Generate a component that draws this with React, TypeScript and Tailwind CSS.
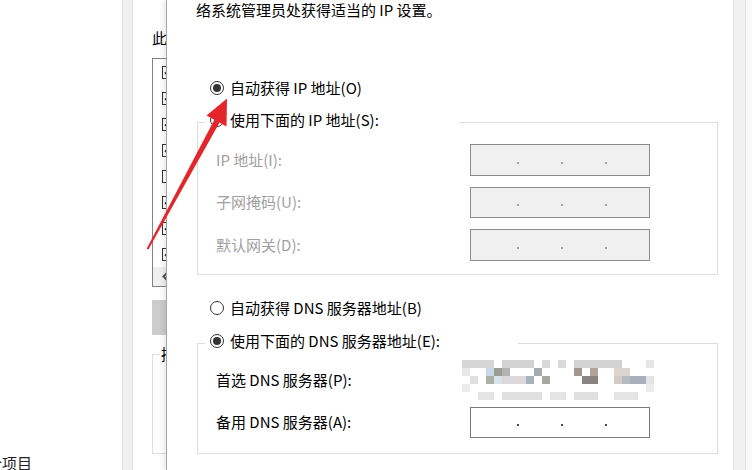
import React from 'react';

type Block = [number, number, number, string];

// blurred address: [col, row, span, colour], 8px blocks
const mosaic: Block[] = [
  [0, 0, 4, '#d6d6d6'], [5, 0, 4, '#d2d2d2'], [10, 0, 1, '#d8d8d8'], [12, 0, 1, '#dadada'], [14, 0, 6, '#d2d2d2'], [23, 0, 1, '#e6e6e6'],
  [0, 1, 1, '#e8e8e8'], [3, 1, 1, '#c8d8e4'], [4, 1, 1, '#9c9c98'], [5, 1, 1, '#b4b4b2'], [9, 1, 1, '#a8acb0'], [14, 1, 1, '#a0988c'], [16, 1, 1, '#b0a49c'], [19, 1, 2, '#ddd5cd'],
  [1, 2, 1, '#e0e0e0'], [3, 2, 1, '#acb0a8'], [4, 2, 1, '#d8e4ec'], [5, 2, 3, '#dcd8dc'], [8, 2, 1, '#a8b4bc'], [10, 2, 1, '#a8a8a0'], [15, 2, 2, '#888480'], [19, 2, 1, '#d4ccc4'], [20, 2, 1, '#b4bcc0'], [21, 2, 2, '#a8b0bc'], [23, 2, 1, '#e4e4e4'],
  [0, 3, 1, '#ececec'], [23, 3, 1, '#ececec'],
  [2, 4, 2, '#e4e4e4'], [5, 4, 5, '#e0e0e0'], [11, 4, 2, '#e4e4e4'], [14, 4, 3, '#e0e0e0'], [19, 4, 3, '#e4e4e4'],
];

const Radio: React.FC<{ checked?: boolean }> = ({ checked }) => (
  <span className="w-[14px] h-[14px] shrink-0 rounded-full border border-[#333] bg-white flex items-center justify-center">
    {checked && <span className="w-[8px] h-[8px] rounded-full bg-[#333]" />}
  </span>
);

const RadioRow: React.FC<{ checked?: boolean; label: string }> = ({ checked, label }) => (
  <div className="h-[20px] flex items-center gap-[6px] whitespace-nowrap">
    <Radio checked={checked} />
    <span>{label}</span>
  </div>
);

const IpBox: React.FC<{ disabled?: boolean }> = ({ disabled }) => (
  <div
    className={
      disabled
        ? 'w-[180px] h-full border border-[#8c8c8c] bg-[#f0f0f0] flex items-center pl-[46px] pt-[5px] gap-[42px]'
        : 'w-[180px] h-full border border-[#7a7a7a] bg-white flex items-center pl-[46px] pt-[5px] gap-[42px]'
    }
  >
    {[0, 1, 2].map(i => (
      <span key={i} className={disabled ? 'w-[2px] h-[2px] rounded-full bg-[#8a8a8a]' : 'w-[2px] h-[2px] rounded-full bg-[#111]'} />
    ))}
  </div>
);

const Check: React.FC<{ on?: boolean }> = ({ on }) => (
  <span className="w-[13px] h-[13px] ml-[9px] border border-[#333] bg-white flex items-center justify-center">
    {on && (
      <svg width="9" height="9" viewBox="0 0 9 9">
        <path d="M1 4.5 L3.5 7 L8 1.5" fill="none" stroke="#222" strokeWidth="1.6" />
      </svg>
    )}
  </span>
);

const App: React.FC = () => {
  const checks = [true, true, true, true, false, true, true, true];

  return (
    <div className="relative w-[752px] h-[470px] overflow-hidden bg-white flex text-[15px] text-black font-['Noto_Sans_CJK_SC',sans-serif]">
      {/* explorer window behind */}
      <div className="w-[122px] shrink-0 flex flex-col justify-end">
        <div className="leading-[20px] ml-[-13px] mb-[-3px] whitespace-nowrap text-[#222]">个项目</div>
      </div>
      <div className="w-[11px] shrink-0 bg-[#f0f0f0] border-l border-[#a8a8a8] border-r border-[#e2e2e2]" />

      {/* ethernet properties, mostly hidden */}
      <div className="w-[33px] shrink-0 overflow-hidden pl-[19px]">
        <div className="pt-[28px] leading-[20px] whitespace-nowrap">此连接使用下列项目(O):</div>
        <div className="mt-[10px] w-[120px] h-[229px] border border-[#828282] flex flex-col">
          {checks.map((on, i) => (
            <div key={i} className="h-[26px] shrink-0 flex items-center">
              <Check on={on} />
            </div>
          ))}
          <div className="flex-1 bg-[#f0f0f0] flex items-center pl-[9px]">
            <svg width="7" height="9" viewBox="0 0 7 9">
              <path d="M5.5 0.5 L1.5 4.5 L5.5 8.5" fill="none" stroke="#555" strokeWidth="2" />
            </svg>
          </div>
        </div>
        <div className="mt-[13px] w-[100px] h-[35px] bg-[#cccccc]" />
        <div className="mt-[19px] w-[100px] h-[100px] border border-[#dcdcdc]">
          <div className="-mt-[11px] ml-[7px] w-fit bg-white leading-[20px] px-[1px] whitespace-nowrap">描述</div>
        </div>
      </div>

      {/* TCP/IPv4 properties */}
      <div className="w-[567px] shrink-0 bg-white border-l border-[#a4a4a4] shadow-[-3px_0_5px_rgba(0,0,0,0.08)] flex flex-col">
        <div className="ml-[29px] leading-[20px] whitespace-nowrap">络系统管理员处获得适当的 IP 设置。</div>

        <div className="mt-[58px] ml-[43px]">
          <RadioRow checked label="自动获得 IP 地址(O)" />
        </div>

        <div className="mt-[24px] ml-[30px] w-[521px] h-[153px] shrink-0 border border-[#dcdcdc]">
          <div className="-mt-[13px] ml-[7px] w-[255px] bg-white pl-[5px]">
            <RadioRow label="使用下面的 IP 地址(S):" />
          </div>
          {['IP 地址(I):', '子网掩码(U):', '默认网关(D):'].map((label, i) => (
            <div key={label} className={i === 0 ? 'mt-[14px] h-[32px] flex items-center pl-[18px]' : i === 1 ? 'mt-[11px] h-[31px] flex items-center pl-[18px]' : 'mt-[11px] h-[32px] flex items-center pl-[18px]'}>
              <span className="w-[254px] text-[#a0a0a0] whitespace-nowrap">{label}</span>
              <IpBox disabled />
            </div>
          ))}
        </div>

        <div className="mt-[23px] ml-[43px]">
          <RadioRow label="自动获得 DNS 服务器地址(B)" />
        </div>

        <div className="mt-[25px] ml-[30px] w-[521px] h-[111px] shrink-0 border border-[#dcdcdc]">
          <div className="-mt-[13px] ml-[7px] w-[313px] bg-white pl-[5px]">
            <RadioRow checked label="使用下面的 DNS 服务器地址(E):" />
          </div>
          <div className="mt-[9px] h-[40px] flex items-center pl-[18px]">
            <span className="w-[246px] whitespace-nowrap">首选 DNS 服务器(P):</span>
            <svg width="192" height="40" viewBox="0 0 192 40">
              {mosaic.map(([c, r, s, fill], i) => (
                <rect key={i} x={c * 8} y={r * 8} width={s * 8} height={8} fill={fill} />
              ))}
            </svg>
          </div>
          <div className="mt-[7px] h-[31px] flex items-center pl-[18px]">
            <span className="w-[254px] whitespace-nowrap">备用 DNS 服务器(A):</span>
            <IpBox />
          </div>
        </div>
      </div>

      <div className="w-[13px] shrink-0 bg-[#f0f0f0] border-l border-[#e3e3e3] border-r border-[#9a9a9a]" />
      <div className="flex-1 bg-[#fafafa]" />

      {/* red annotation arrow */}
      <svg className="absolute inset-0 pointer-events-none" width="752" height="470" viewBox="0 0 752 470">
        <polygon points="214.6,119.2 219.6,122.4 148.4,249.4 146.6,248.8" fill="#e3262c" />
        <polygon points="227,98.5 206.5,115.5 226.5,126.5" fill="#e3262c" />
      </svg>
    </div>
  );
};

export default App;
